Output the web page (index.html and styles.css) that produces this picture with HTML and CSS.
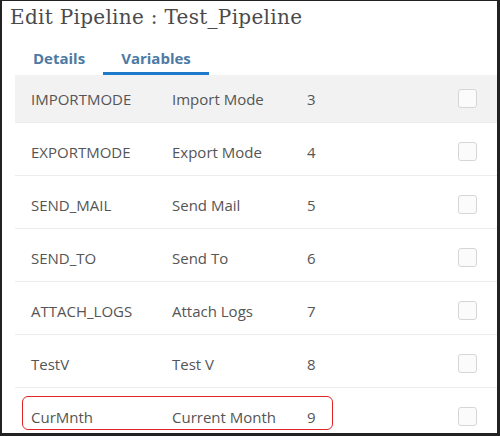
FILE: index.html
```html
<!DOCTYPE html>
<html lang="en">

<head>
    <meta charset="UTF-8">
    <meta name="viewport" content="width=device-width, initial-scale=1.0">
    <title>Edit Pipeline</title>
    <link rel="stylesheet" href="styles.css">
</head>

<body>
    <div class="frame">
        <h1 class="title">Edit Pipeline : Test_Pipeline</h1>

        <div class="tabs">
            <div class="tab">Details</div>
            <div class="tab active">Variables</div>
        </div>

        <div class="var-list">
            <div class="var-row first selected">
                <div class="cell">IMPORTMODE</div>
                <div class="cell">Import Mode</div>
                <div class="cell">3</div>
                <div class="check"></div>
            </div>
            <div class="var-row">
                <div class="cell">EXPORTMODE</div>
                <div class="cell">Export Mode</div>
                <div class="cell">4</div>
                <div class="check"></div>
            </div>
            <div class="var-row">
                <div class="cell">SEND_MAIL</div>
                <div class="cell">Send Mail</div>
                <div class="cell">5</div>
                <div class="check"></div>
            </div>
            <div class="var-row">
                <div class="cell">SEND_TO</div>
                <div class="cell">Send To</div>
                <div class="cell">6</div>
                <div class="check"></div>
            </div>
            <div class="var-row">
                <div class="cell">ATTACH_LOGS</div>
                <div class="cell">Attach Logs</div>
                <div class="cell">7</div>
                <div class="check"></div>
            </div>
            <div class="var-row">
                <div class="cell">TestV</div>
                <div class="cell">Test V</div>
                <div class="cell">8</div>
                <div class="check"></div>
            </div>
            <div class="var-row last">
                <div class="cell">CurMnth</div>
                <div class="cell">Current Month</div>
                <div class="cell">9</div>
                <div class="check"></div>
                <div class="highlight"></div>
            </div>
        </div>
    </div>
</body>

</html>
```

FILE: styles.css
```css
* {
    margin: 0;
    padding: 0;
    box-sizing: border-box;
}

body {
    width: 500px;
    height: 436px;
    overflow: hidden;
    background: #fff;
}

.frame {
    width: 500px;
    height: 436px;
    border-style: solid;
    border-color: #222;
    border-width: 1px 3px 3px 2px;
    overflow: hidden;
    font-family: 'Open Sans', sans-serif;
}

.title {
    font-family: 'DejaVu Serif', serif;
    font-weight: normal;
    font-size: 20px;
    letter-spacing: 0.3px;
    line-height: 28px;
    color: #4a4a4a;
    padding: 2px 0 0 8px;
}

.tabs {
    display: flex;
    margin-top: 14px;
    padding-left: 13px;
    height: 30px;
}

.tab {
    font-size: 15px;
    font-weight: bold;
    color: #4d7aa3;
    padding: 2px 18px 0 18px;
    height: 30px;
    line-height: 22px;
}

.tab.active {
    padding: 2px 18px 0 18px;
    border-bottom: 3px solid #1f7bc9;
}

.var-list {
    margin-left: 13px;
}

.var-row {
    position: relative;
    display: grid;
    grid-template-columns: 141px 135px 151px 19px;
    align-items: center;
    height: 53px;
    padding: 5px 0 0 16px;
    border-top: 1px solid #ececec;
    font-size: 15px;
    color: #555;
}

.var-row.first {
    height: 47px;
    padding-top: 0;
    border-top: none;
}

.var-row.selected {
    background: #f2f2f2;
}

.cell {
    white-space: nowrap;
}

.check {
    width: 19px;
    height: 19px;
    border: 1px solid #d6d6d6;
    border-radius: 3px;
    background: #fbfbfb;
}

.highlight {
    position: absolute;
    left: 7px;
    top: 8px;
    width: 311px;
    height: 34px;
    border: 1.5px solid #e02424;
    border-radius: 6px;
}
```
